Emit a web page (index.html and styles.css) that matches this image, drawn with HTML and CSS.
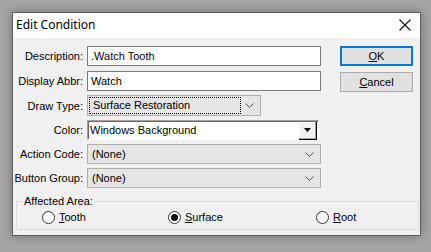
FILE: index.html
```html
<!DOCTYPE html>
<html>
<head>
<meta charset="utf-8">
<link rel="stylesheet" href="styles.css">
</head>
<body>
<div class="window">
  <div class="titlebar">
    <span class="title">Edit Condition</span>
    <svg class="close" width="12" height="12" viewBox="0 0 12 12"><path d="M0.5 0.5 L11.5 11.5 M11.5 0.5 L0.5 11.5" stroke="#111" stroke-width="1.1" fill="none"/></svg>
  </div>
  <div class="content">
    <div class="top">
      <div class="form">
        <div class="row r5">
          <label>Description:</label>
          <div class="edit">.Watch Tooth</div>
        </div>
        <div class="row r4">
          <label>Display Abbr:</label>
          <div class="edit">Watch</div>
        </div>
        <div class="row r4 tall">
          <label>Draw Type:</label>
          <div class="combo short"><span class="focus">Surface Restoration</span><svg class="chev" width="9" height="5" viewBox="0 0 9 5"><path d="M0.5 0.5 L4.5 4.5 L8.5 0.5" stroke="#555" fill="none"/></svg></div>
        </div>
        <div class="row r4">
          <label>Color:</label>
          <div class="classic"><span class="ctext">Windows Background</span><span class="dbtn"><svg width="7" height="4" viewBox="0 0 7 4"><path d="M0 0 H7 L3.5 4 Z" fill="#000"/></svg></span></div>
        </div>
        <div class="row r4">
          <label>Action Code:</label>
          <div class="combo"><span class="ctxt">(None)</span><svg class="chev" width="9" height="5" viewBox="0 0 9 5"><path d="M0.5 0.5 L4.5 4.5 L8.5 0.5" stroke="#555" fill="none"/></svg></div>
        </div>
        <div class="row">
          <label>Button Group:</label>
          <div class="combo"><span class="ctxt">(None)</span><svg class="chev" width="9" height="5" viewBox="0 0 9 5"><path d="M0.5 0.5 L4.5 4.5 L8.5 0.5" stroke="#555" fill="none"/></svg></div>
        </div>
      </div>
      <div class="buttons">
        <div class="btn default"><u>O</u>K</div>
        <div class="btn"><u>C</u>ancel</div>
      </div>
    </div>
    <div class="group">
      <span class="legend">Affected Area:</span>
      <div class="radios">
        <div class="radio r-tooth"><span class="circle"></span><span><u>T</u>ooth</span></div>
        <div class="radio r-surface"><span class="circle on"></span><span><u>S</u>urface</span></div>
        <div class="radio r-root"><span class="circle"></span><span><u>R</u>oot</span></div>
      </div>
    </div>
  </div>
</div>
</body>
</html>
```
FILE: styles.css
```css
html, body {
  margin: 0;
  padding: 0;
}
body {
  width: 431px;
  height: 252px;
  background: #a4a4a4;
  overflow: hidden;
  font-family: "Liberation Sans", Arial, sans-serif;
  font-size: 11px;
  color: #000;
}
.window {
  margin: 12px 0 0 12px;
  width: 407px;
  height: 222px;
  border: 1px solid #5c5c5c;
  background: #f0f0f0;
  box-shadow: 0 0 10px rgba(0,0,0,0.3);
  display: flex;
  flex-direction: column;
}
.titlebar {
  height: 25px;
  background: #fff;
  display: flex;
  align-items: center;
  justify-content: space-between;
  padding: 0 9px 0 3px;
  flex: none;
}
.title {
  font-family: "Noto Sans", sans-serif;
  font-size: 12px;
  position: relative;
  top: -1px;
}
.close {
  display: block;
  margin-top: -1px;
}
.content {
  flex: 1;
  display: flex;
  flex-direction: column;
}
.top {
  display: flex;
  padding-top: 8px;
}
.form {
  display: flex;
  flex-direction: column;
}
.row {
  display: flex;
  align-items: center;
  height: 20px;
}
.row.r5 { margin-bottom: 5px; }
.row.r4 { margin-bottom: 4px; }
.row.tall { height: 21px; }
.row label {
  width: 70px;
  text-align: right;
  margin-right: 4px;
  white-space: nowrap;
}
.edit {
  box-sizing: border-box;
  width: 234px;
  height: 20px;
  border: 1px solid #7a7a7a;
  background: #fff;
  padding-left: 3px;
  line-height: 18px;
}
.combo {
  box-sizing: border-box;
  width: 234px;
  height: 20px;
  border: 1px solid #adadad;
  background: #e5e5e5;
  display: flex;
  align-items: center;
  justify-content: space-between;
  padding: 0 6px 0 4px;
}
.combo.short {
  width: 174px;
  height: 21px;
  padding-left: 1px;
}
.focus {
  box-sizing: border-box;
  width: 152px;
  height: 17px;
  border: 1px dotted #000;
  padding-left: 3px;
  line-height: 15px;
}
.chev { display: block; }
.classic {
  box-sizing: border-box;
  width: 232px;
  height: 20px;
  border-top: 1px solid #a0a0a0;
  border-left: 1px solid #a0a0a0;
  border-right: 1px solid #fff;
  border-bottom: 1px solid #fff;
  box-shadow: inset 1px 1px 0 #696969;
  background: #fff;
  display: flex;
  align-items: center;
  justify-content: space-between;
  padding-left: 2px;
}
.dbtn {
  box-sizing: border-box;
  width: 18px;
  height: 18px;
  background: #f0f0f0;
  border-right: 1px solid #000;
  border-bottom: 1px solid #000;
  box-shadow: inset -1px -1px 0 #a0a0a0, inset 1px 1px 0 #fff;
  display: flex;
  align-items: center;
  justify-content: center;
  margin-top: 1px;
  margin-right: 1px;
}
.dbtn svg { display: block; }
.buttons {
  display: flex;
  flex-direction: column;
  margin-left: 19px;
}
.btn {
  box-sizing: border-box;
  width: 73px;
  height: 20px;
  border: 1px solid #adadad;
  background: #e1e1e1;
  text-align: center;
  line-height: 18px;
  margin-bottom: 6px;
}
.btn.default {
  border: 2px solid #0078d7;
  line-height: 16px;
}
.group {
  box-sizing: border-box;
  margin: 13px 1px 0 3px;
  height: 29px;
  border: 1px solid #dcdcdc;
  display: flex;
  flex-direction: column;
  align-items: flex-start;
}
.legend {
  display: block;
  margin: -7px 0 0 6px;
  padding: 0 1px;
  line-height: 12px;
  background: #f0f0f0;
}
.radios {
  display: flex;
  align-items: center;
  height: 13px;
  margin-top: 4px;
}
.radio {
  display: flex;
  align-items: center;
  line-height: 13px;
}
.r-tooth { margin-left: 25px; width: 126px; }
.r-surface { width: 148px; }
.circle {
  box-sizing: border-box;
  width: 13px;
  height: 13px;
  border: 1px solid #333;
  border-radius: 50%;
  background: #fff;
  margin-right: 4px;
  display: flex;
  align-items: center;
  justify-content: center;
}
.circle.on::after {
  content: "";
  width: 7px;
  height: 7px;
  border-radius: 50%;
  background: #111;
}
```
